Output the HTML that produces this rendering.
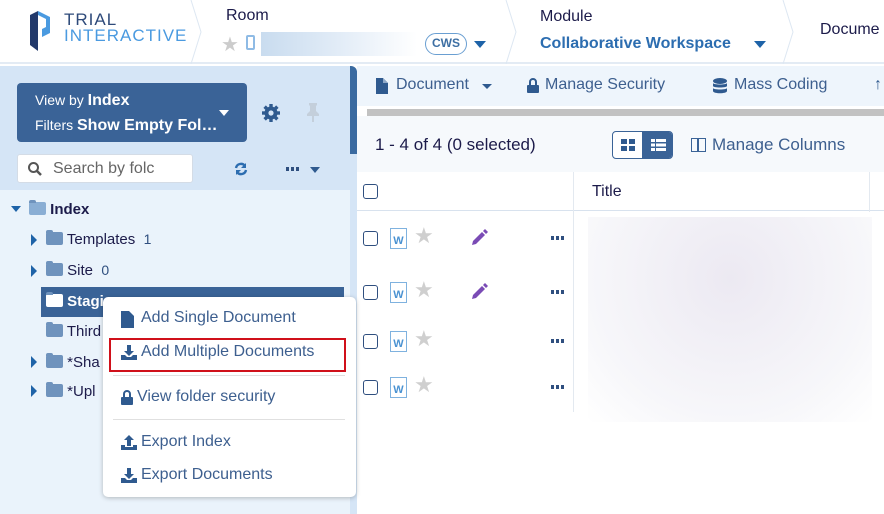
<!DOCTYPE html><html><head><style>
*{box-sizing:border-box;margin:0;padding:0}
body{width:884px;height:514px;overflow:hidden;font-family:"Liberation Sans",sans-serif;background:#fff;position:relative;color:#1a1a40}
.a{position:absolute}
.hd{left:0;top:0;width:884px;height:64px;background:#fff;border-bottom:2px solid #e3ebf4}
.lbl{font-size:16px;color:#1c1b4a}
.fold{display:inline-block;width:17px;height:13px;background:#6f93bd;border-radius:2px;position:relative;vertical-align:-1px}
.fold:before{content:"";position:absolute;left:0;top:-2px;width:7px;height:3px;background:#6f93bd;border-radius:2px 2px 0 0}
.tri{position:absolute;width:0;height:0;border-top:6px solid transparent;border-bottom:6px solid transparent;border-left:6px solid #1e63a8}
.tree div{position:absolute;font-size:15px;color:#1c1b4a;white-space:nowrap}
.menu div{position:absolute;left:38px;font-size:16px;color:#3d5f8f;white-space:nowrap}
.menu svg{position:absolute;left:18px}
.cb{position:absolute;width:15px;height:15px;border:1.5px solid #2f4f7f;border-radius:3px;background:#fff}
.w{position:absolute;width:17px;height:21px;border:1.5px solid #7fb2df;color:#4a92d2;font-size:11px;font-weight:bold;text-align:center;line-height:24px}
.star{position:absolute;color:#cfcfcf;font-size:22px;line-height:20px}
.dots{position:absolute;width:13px;height:4px;background:linear-gradient(90deg,#2f4f7f 3px,transparent 3px,transparent 5px,#2f4f7f 5px,#2f4f7f 8px,transparent 8px,transparent 10px,#2f4f7f 10px)}
</style></head><body>
<div class="a hd"></div>
<svg class="a" style="left:28px;top:7px" width="22" height="46"><path d="M2 8 L10 4 L10 44 L2 38Z" fill="#233a6b"/><path d="M10 4 L22 10 L22 26 L14 30 L14 22 L18 20 L18 12 L10 8Z" fill="#4a9ae0"/></svg>
<div class="a" style="left:64px;top:12px;font-size:17px;color:#2e4a7a;letter-spacing:1px;line-height:16px">TRIAL<br><span style="color:#4a9ae0">INTERACTIVE</span></div>
<svg class="a" style="left:188px;top:0" width="16" height="64"><path d="M3 0 L13 32 L3 64" stroke="#dde7f2" fill="none"/></svg>
<div class="a lbl" style="left:226px;top:7px">Room</div>
<div class="a" style="left:221px;top:32px;color:#ccc;font-size:20px">★</div>
<div class="a" style="left:246px;top:35px;width:9px;height:15px;border:2px solid #8fbbe5;border-radius:2px"></div>
<div class="a" style="left:261px;top:32px;width:156px;height:24px;background:linear-gradient(90deg,#c9dcef,#e2ecf7,#fff)"></div>
<div class="a" style="left:425px;top:33px;width:42px;height:22px;border:1.5px solid #6a9fd2;border-radius:11px;font-size:12px;font-weight:bold;color:#3d6fa3;text-align:center;line-height:19px">CWS</div>
<div class="a" style="left:474px;top:41px;border-left:6px solid transparent;border-right:6px solid transparent;border-top:7px solid #1e63a8"></div>
<svg class="a" style="left:503px;top:0" width="16" height="64"><path d="M3 0 L13 32 L3 64" stroke="#dde7f2" fill="none"/></svg>
<div class="a lbl" style="left:540px;top:8px">Module</div>
<div class="a" style="left:540px;top:35px;font-size:16px;font-weight:bold;color:#2c6db0">Collaborative Workspace</div>
<div class="a" style="left:754px;top:41px;border-left:6px solid transparent;border-right:6px solid transparent;border-top:7px solid #1e63a8"></div>
<svg class="a" style="left:780px;top:0" width="16" height="64"><path d="M3 0 L13 32 L3 64" stroke="#dde7f2" fill="none"/></svg>
<div class="a lbl" style="left:820px;top:21px">Docume</div>
<!-- left panel -->
<div class="a" style="left:0;top:66px;width:350px;height:124px;background:#d5e5f6"></div>
<div class="a" style="left:0;top:190px;width:350px;height:324px;background:#eaf3fb"></div>
<div class="a" style="left:350px;top:66px;width:7px;height:88px;background:#3a6aa0;border-radius:0 6px 0 0"></div>
<div class="a" style="left:350px;top:154px;width:7px;height:360px;background:#d5e5f6"></div>
<div class="a" style="left:17px;top:83px;width:230px;height:59px;background:#3a6397;border-radius:4px;color:#fff">
<div class="a" style="left:18px;top:9px;font-size:14px">View by <b style="font-size:16px">Index</b></div>
<div class="a" style="left:18px;top:34px;font-size:14px">Filters <b style="font-size:16px">Show Empty Fol…</b></div>
<div class="a" style="left:202px;top:27px;border-left:5px solid transparent;border-right:5px solid transparent;border-top:6px solid #fff"></div></div>
<svg class="a" style="left:262px;top:104px" width="18" height="18" viewBox="0 0 18 18"><g fill="#2f5a8f"><circle cx="9" cy="9" r="6.5"/><rect x="7.3" y="0" width="3.4" height="18"/><rect x="0" y="7.3" width="18" height="3.4"/><rect x="7.3" y="0" width="3.4" height="18" transform="rotate(45 9 9)"/><rect x="7.3" y="0" width="3.4" height="18" transform="rotate(-45 9 9)"/></g><circle cx="9" cy="9" r="2.6" fill="#d5e5f6"/></svg>
<svg class="a" style="left:306px;top:102px" width="14" height="20"><path d="M3 1h8v2l-1 1v5l3 3v2H1v-2l3-3V4L3 3z M6 14h2v6H6z" fill="#c4cfdb"/></svg>
<div class="a" style="left:17px;top:154px;width:176px;height:29px;background:#fff;border:1px solid #d4dce6;border-radius:3px;font-size:16px;color:#666;padding:5px 0 0 35px;overflow:hidden;white-space:nowrap">Search by folc</div>
<svg class="a" style="left:27px;top:161px" width="16" height="16"><circle cx="6.5" cy="6.5" r="4.5" stroke="#555" stroke-width="2" fill="none"/><path d="M10 10 L14 14" stroke="#555" stroke-width="2.5"/></svg>
<svg class="a" style="left:234px;top:162px" width="14" height="14" viewBox="0 0 14 14"><path d="M2 6 A5 5 0 0 1 11 4" stroke="#2c6db0" stroke-width="2.4" fill="none"/><path d="M12 1v5H7z" fill="#2c6db0"/><path d="M12 8 A5 5 0 0 1 3 10" stroke="#2c6db0" stroke-width="2.4" fill="none"/><path d="M2 13V8h5z" fill="#2c6db0"/></svg>
<div class="dots" style="left:286px;top:167px"></div>
<div class="a" style="left:310px;top:167px;border-left:5px solid transparent;border-right:5px solid transparent;border-top:6px solid #2f5a8f"></div>
<div class="tree">
<div style="left:11px;top:206px;border-left:5px solid transparent;border-right:5px solid transparent;border-top:6px solid #1e63a8"></div>
<div style="left:29px;top:201px"><span class="fold" style="background:#8aaed4"></span> <b>Index</b></div>
<div class="tri" style="left:31px;top:234px"></div>
<div style="left:46px;top:231px"><span class="fold"></span> Templates &nbsp;<span style="font-size:14px;color:#2f4f7f">1</span></div>
<div class="tri" style="left:31px;top:265px"></div>
<div style="left:46px;top:262px"><span class="fold"></span> Site &nbsp;<span style="font-size:14px;color:#2f4f7f">0</span></div>
<div style="left:41px;top:287px;width:303px;height:30px;background:#3a6397"></div>
<div style="left:46px;top:293px;color:#fff"><span class="fold" style="background:#fff"></span> <b>Stagi</b></div>
<div style="left:46px;top:323px"><span class="fold"></span> Third</div>
<div class="tri" style="left:31px;top:356px"></div>
<div style="left:46px;top:354px"><span class="fold"></span> *Sha</div>
<div class="tri" style="left:31px;top:385px"></div>
<div style="left:46px;top:383px"><span class="fold"></span> *Upl</div>
</div>
<!-- right -->
<div class="a" style="left:357px;top:66px;width:527px;height:40px;background:#eef5fc"></div>
<div class="a" style="left:367px;top:109px;width:517px;height:7px;background:#c2c2c2"></div>
<div class="a" style="left:357px;top:116px;width:527px;height:56px;background:#f6f9fc"></div>
<svg class="a" style="left:376px;top:78px" width="12" height="16"><path d="M0 0h7l5 5v11H0z" fill="#2f5a8f"/><path d="M7 0v5h5" fill="#8fa9c8"/></svg>
<div class="a" style="left:396px;top:76px;font-size:16px;color:#3d5f8f">Document</div>
<div class="a" style="left:482px;top:84px;border-left:5px solid transparent;border-right:5px solid transparent;border-top:5px solid #2f5a8f"></div>
<svg class="a" style="left:527px;top:78px" width="12" height="15"><path d="M3 7V4a3 3 0 0 1 6 0v3" stroke="#2f5a8f" stroke-width="2" fill="none"/><rect x="0" y="7" width="12" height="8" rx="1" fill="#2f5a8f"/></svg>
<div class="a" style="left:545px;top:76px;font-size:16px;color:#3d5f8f">Manage Security</div>
<svg class="a" style="left:713px;top:78px" width="14" height="16"><g fill="#2f5a8f"><ellipse cx="7" cy="3" rx="7" ry="3"/><path d="M0 5c0 2 14 2 14 0v3c0 2-14 2-14 0z"/><path d="M0 10c0 2 14 2 14 0v3c0 3-14 3-14 0z"/></g></svg>
<div class="a" style="left:734px;top:76px;font-size:16px;color:#3d5f8f">Mass Coding</div>
<div class="a" style="left:874px;top:76px;font-size:16px;color:#2f5a8f;font-weight:bold">↑</div>
<div class="a" style="left:375px;top:135px;font-size:17px;color:#1c1b4a">1 - 4 of 4 (0 selected)</div>
<div class="a" style="left:612px;top:131px;width:61px;height:28px;border:1.5px solid #3a6397;border-radius:4px;background:#fff;overflow:hidden">
<div class="a" style="left:29px;top:0;width:31px;height:28px;background:#3a6397"></div>
<svg class="a" style="left:8px;top:7px" width="14" height="12"><g fill="#2f5a8f"><rect width="6" height="5"/><rect x="8" width="6" height="5"/><rect y="7" width="6" height="5"/><rect x="8" y="7" width="6" height="5"/></g></svg>
<svg class="a" style="left:38px;top:7px" width="15" height="12"><g fill="#fff"><rect width="4" height="3"/><rect x="5" width="10" height="3"/><rect y="4.5" width="4" height="3"/><rect x="5" y="4.5" width="10" height="3"/><rect y="9" width="4" height="3"/><rect x="5" y="9" width="10" height="3"/></g></svg></div>
<div class="a" style="left:691px;top:138px;width:15px;height:14px;border:1.5px solid #3a6397;background:linear-gradient(90deg,transparent 5px,#3a6397 5px,#3a6397 7px,transparent 7px)"></div>
<div class="a" style="left:712px;top:135px;font-size:17px;color:#3d5f8f">Manage Columns</div>
<div class="a" style="left:357px;top:210px;width:527px;height:1px;background:#d8e2ee"></div>
<div class="a" style="left:573px;top:172px;width:1px;height:240px;background:#e3e9f0"></div>
<div class="a" style="left:869px;top:172px;width:1px;height:40px;background:#e3e9f0"></div>
<div class="a" style="left:592px;top:183px;font-size:16px;color:#1c1b4a">Title</div>
<div class="cb" style="left:363px;top:184px"></div>
<div class="a" style="left:588px;top:217px;width:284px;height:205px;background:radial-gradient(ellipse at 50% 30%,#ece9f2,#f7f7fa 70%,#fff)"></div>
<svg width="0" height="0" style="position:absolute"><defs><g id="pen"><path d="M3 13l9-9 3 3-9 9-4 1z" fill="#7a4bb5"/><path d="M13 3l2-2 3 3-2 2z" fill="#7a4bb5"/></g></defs></svg>
<div class="cb" style="left:363px;top:231px"></div><div class="w" style="left:390px;top:228px">W</div><div class="star" style="left:414px;top:226px">★</div><svg class="a" style="left:470px;top:228px" width="19" height="19"><use href="#pen"/></svg><div class="dots" style="left:551px;top:236px"></div>
<div class="cb" style="left:363px;top:285px"></div><div class="w" style="left:390px;top:282px">W</div><div class="star" style="left:414px;top:280px">★</div><svg class="a" style="left:470px;top:282px" width="19" height="19"><use href="#pen"/></svg><div class="dots" style="left:551px;top:290px"></div>
<div class="cb" style="left:363px;top:334px"></div><div class="w" style="left:390px;top:331px">W</div><div class="star" style="left:414px;top:329px">★</div><div class="dots" style="left:551px;top:339px"></div>
<div class="cb" style="left:363px;top:380px"></div><div class="w" style="left:390px;top:377px">W</div><div class="star" style="left:414px;top:375px">★</div><div class="dots" style="left:551px;top:385px"></div>
<!-- menu -->
<div class="a menu" style="left:103px;top:297px;width:253px;height:200px;background:#fff;border-radius:5px;box-shadow:0 1px 5px rgba(0,0,0,.25)">
<svg style="top:14px" width="13" height="17"><path d="M0 0h8l5 5v12H0z" fill="#2f5a8f"/></svg>
<div style="top:12px">Add Single Document</div>
<svg style="top:48px" width="16" height="15"><path d="M6 0h4v6h3l-5 5-5-5h3z M0 10h4l2 2h4l2-2h4v5H0z" fill="#2f5a8f"/></svg>
<div style="top:46px">Add Multiple Documents</div>
<div style="left:6px;top:41px;width:237px;height:34px;border:2px solid #d0101a"></div>
<div style="left:10px;top:78px;width:232px;height:1px;background:#e0e0e0"></div>
<svg style="top:93px" width="12" height="15"><path d="M3 7V4a3 3 0 0 1 6 0v3" stroke="#2f5a8f" stroke-width="2" fill="none"/><rect x="0" y="7" width="12" height="8" rx="1" fill="#2f5a8f"/></svg>
<div style="top:91px;left:34px">View folder security</div>
<div style="left:10px;top:122px;width:232px;height:1px;background:#e0e0e0"></div>
<svg style="top:138px" width="16" height="15"><path d="M8 0l5 5h-3v6H6V5H3z M0 10h4v2h8v-2h4v5H0z" fill="#2f5a8f"/></svg>
<div style="top:136px">Export Index</div>
<svg style="top:171px" width="16" height="15"><path d="M6 0h4v6h3l-5 5-5-5h3z M0 10h4l2 2h4l2-2h4v5H0z" fill="#2f5a8f"/></svg>
<div style="top:169px">Export Documents</div>
</div>
</body></html>
